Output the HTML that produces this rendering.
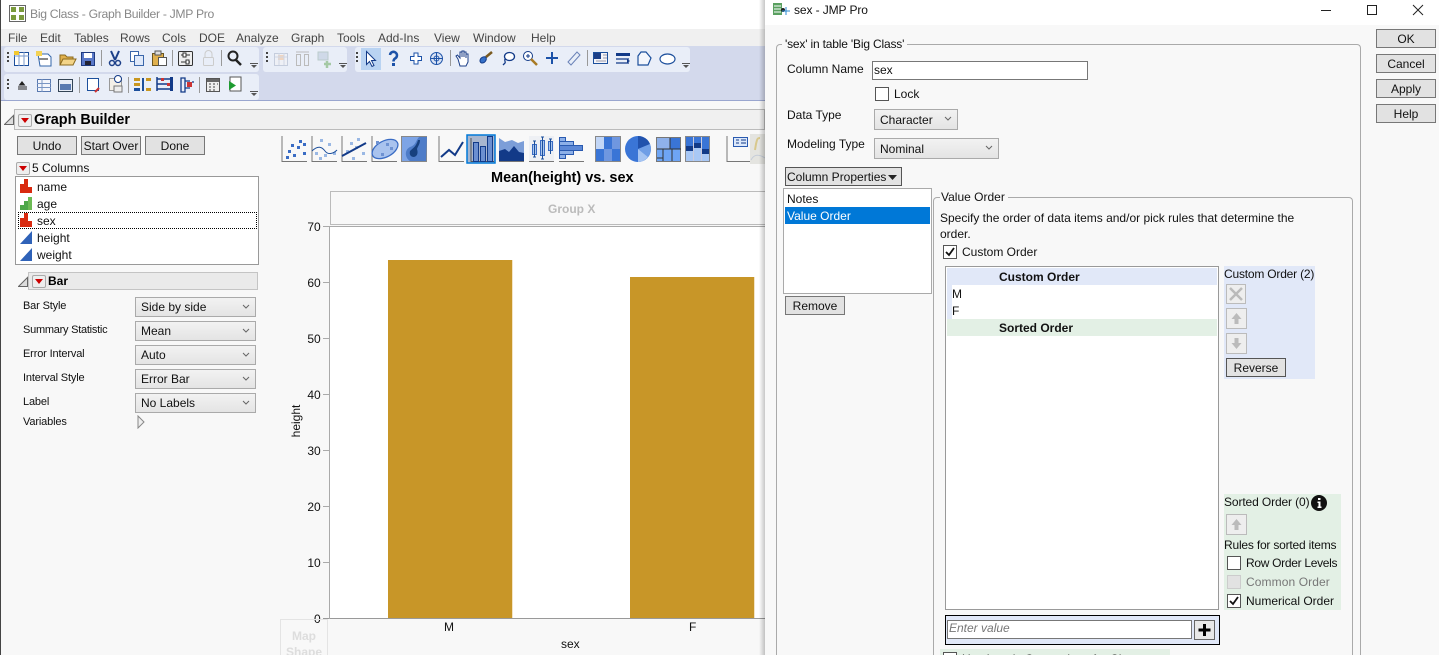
<!DOCTYPE html>
<html><head><meta charset="utf-8"><style>
html,body{margin:0;padding:0;background:#f8f8f8;overflow:hidden}
#r{position:relative;width:1439px;height:655px;overflow:hidden;background:#f8f8f8;font:12px/14px "Liberation Sans",sans-serif;color:#111}
#r div,#r svg{position:absolute}
.t{white-space:nowrap}
.b{background:#e2e2e2;border:1px solid #777;box-sizing:border-box;text-align:center;white-space:nowrap}
.s{background:linear-gradient(#f2f2f2,#e4e4e4);border:1px solid #aaa;box-sizing:border-box;padding-left:5px;white-space:nowrap;line-height:19px}
.s svg{right:5px;top:6px}
.c{background:#fff;border:1px solid #555;box-sizing:border-box;width:14px;height:14px}
.tb{background:#e9eef8;border-radius:3px}
.m{color:#444;top:31px}
.rd{width:12px;height:11px;background:#eee;border:1px solid #aaa;border-radius:2px}
.rd:after{content:"";position:absolute;left:2px;top:3px;border:4px solid transparent;border-top:5px solid #c00;border-bottom:0}
.ib{background:#eee;border:1px solid #bbb;box-sizing:border-box}
.gr{border:1px solid #aaa;border-bottom:none;border-radius:4px 4px 0 0;box-sizing:border-box}
.tk{background:#aaa;height:1px;width:6px;left:323px}
.yl{left:307px;width:14px;text-align:center}
.lb{left:23px;font-size:11px;letter-spacing:-.15px}
</style></head><body><div id="r">

<!-- main window -->
<div style="left:0;top:0;width:765px;height:29px;background:#fff"></div>
<svg style="left:9px;top:5px" width="17" height="17" viewBox="0 0 17 17"><rect x=".5" y=".5" width="16" height="16" fill="#fff" stroke="#666"/><rect x="2" y="2" width="5" height="5" fill="#7a9a3c"/><rect x="10" y="2" width="5" height="5" fill="#7a9a3c"/><rect x="2" y="10" width="5" height="5" fill="#7a9a3c"/><rect x="10" y="10" width="5" height="5" fill="#7a9a3c"/></svg>
<div class="t" style="left:30px;top:7px;color:#888;font-size:12.2px;letter-spacing:-.31px">Big Class - Graph Builder - JMP Pro</div>
<div style="left:0;top:29px;width:765px;height:17px;background:#f0f0f0"></div>
<div class="t m" style="left:8px">File</div><div class="t m" style="left:40px">Edit</div><div class="t m" style="left:74px">Tables</div><div class="t m" style="left:120px">Rows</div><div class="t m" style="left:162px">Cols</div><div class="t m" style="left:199px">DOE</div><div class="t m" style="left:236px">Analyze</div><div class="t m" style="left:291px">Graph</div><div class="t m" style="left:337px">Tools</div><div class="t m" style="left:378px">Add-Ins</div><div class="t m" style="left:434px">View</div><div class="t m" style="left:473px">Window</div><div class="t m" style="left:531px">Help</div>
<div style="left:0;top:46px;width:765px;height:54px;background:#d3d9ec;border-bottom:1px solid #9aa6cf"></div>
<div class="tb" style="left:4px;top:47px;width:255px;height:25px"></div>
<div class="tb" style="left:263px;top:47px;width:84px;height:25px"></div>
<div class="tb" style="left:355px;top:47px;width:335px;height:25px"></div>
<div class="tb" style="left:4px;top:74px;width:255px;height:26px"></div>
<div style="left:361px;top:48px;width:20px;height:22px;background:#b9d3f2"></div>

<svg style="left:0;top:46px" width="765" height="54" viewBox="0 0 765 54" fill="none" stroke-width="1">
<!-- grips -->
<g fill="#444" stroke="none"><rect x="7" y="6" width="2" height="2"/><rect x="7" y="10" width="2" height="2"/><rect x="7" y="14" width="2" height="2"/><rect x="266" y="6" width="2" height="2"/><rect x="266" y="10" width="2" height="2"/><rect x="266" y="14" width="2" height="2"/><rect x="356" y="6" width="2" height="2"/><rect x="356" y="10" width="2" height="2"/><rect x="356" y="14" width="2" height="2"/><rect x="7" y="33" width="2" height="2"/><rect x="7" y="37" width="2" height="2"/><rect x="7" y="41" width="2" height="2"/></g>
<!-- overflow -->
<g fill="#555" stroke="none"><path d="M250 17h8v1h-8zM251 19h6l-3 3zM339 17h8v1h-8zM340 19h6l-3 3zM682 17h8v1h-8zM683 19h6l-3 3zM250 45h8v1h-8zM251 47h6l-3 3z"/></g>
<!-- separators -->
<g stroke="#999"><path d="M101.500 4v16M172.500 4v16M221.500 4v16M450.500 4v16M587.500 4v16M79.500 31v16M128.500 31v16M199.500 31v16"/></g>
<!-- row 1 -->
<rect x="14.500" y="6.500" width="14" height="13" fill="#fff" stroke="#1c4f9c"/><path d="M14 10h15M19 6v14M24 6v14" stroke="#7a9acb"/><rect x="14" y="5" width="5" height="4" fill="#f3c82f"/>
<path d="M38 8h10l3 3v9H40z" fill="#fff" stroke="#36a"/><rect x="36" y="5" width="6" height="5" fill="#f3d255"/><rect x="39" y="12" width="9" height="2" fill="#888"/>
<path d="M60 19V9h5l2 2h6v8z" fill="#e0b04d" stroke="#8a6a20"/><path d="M60 19l3-6h13l-3 6z" fill="#f3d488" stroke="#8a6a20"/>
<rect x="81.500" y="6.500" width="13" height="13" fill="#5a78c8" stroke="#1f3a80"/><rect x="84" y="7" width="8" height="5" fill="#fff"/><rect x="85" y="15" width="6" height="4" fill="#223"/>
<path d="M111 5l4 9M119 5l-4 9" stroke="#1c3f88" stroke-width="2"/><circle cx="112" cy="17" r="2.500" stroke="#1c3f88" stroke-width="1.500"/><circle cx="118" cy="17" r="2.500" stroke="#1c3f88" stroke-width="1.500"/>
<rect x="130.500" y="5.500" width="8" height="10" fill="#fff" stroke="#3a66aa"/><rect x="134.500" y="9.500" width="9" height="10" fill="#dfe9fa" stroke="#3a66aa"/>
<rect x="152.500" y="7.500" width="11" height="12" fill="#e0b04d" stroke="#6a5520"/><rect x="155" y="5" width="6" height="4" fill="#ddd" stroke="#555"/><rect x="158.500" y="11.500" width="8" height="8" fill="#fff" stroke="#555"/>
<rect x="178.500" y="5.500" width="14" height="14" rx="1" fill="#eee" stroke="#333"/><path d="M181 9h9M181 16h9" stroke="#333"/><rect x="183" y="7" width="3" height="4" fill="#fff" stroke="#333"/><rect x="186" y="14" width="3" height="4" fill="#fff" stroke="#333"/>
<rect x="203.500" y="11.500" width="10" height="8" rx="1" stroke="#ccc"/><path d="M205 11V8a3.500 3.500 0 0 1 7 0v3" stroke="#ccc"/>
<circle cx="233" cy="10" r="4.500" stroke="#222" stroke-width="2"/><path d="M236 14l5 5" stroke="#222" stroke-width="2.500"/>
<!-- disabled -->
<rect x="274.500" y="7.500" width="13" height="12" fill="#eef0f6" stroke="#c5cddd"/><rect x="278" y="9" width="6" height="5" fill="#f0d5c0"/><path d="M275 11h12M279 7v12M284 7v12" stroke="#d0d6e4"/>
<rect x="296.500" y="8.500" width="4" height="11" stroke="#bbb"/><rect x="304.500" y="8.500" width="4" height="11" stroke="#bbb"/><path d="M296 6h13" stroke="#bbb"/>
<rect x="318" y="6" width="10" height="8" fill="#cfd9e8" stroke="#bcc"/><path d="M327 15v7M324 18h7" stroke="#a5c9a5" stroke-width="2.500"/>
<!-- arrow -->
<path d="M366.500 5.500v13l3-3 2.500 5 2-1-2.500-5h4z" fill="#fff" stroke="#123a88"/>
<path d="M390 9a3.500 3.500 0 1 1 5 3.500c-1 .7-1.500 1.500-1.500 3" stroke="#1c52a8" stroke-width="2.500"/><rect x="392" y="17" width="3" height="3" fill="#1c52a8"/>
<path d="M412.500 6.500h4v3.500h3.500v4h-3.500v3.500h-4V14H409v-4h3.500z" transform="translate(1.500 .5)" fill="#fff" stroke="#1c52a8"/>
<circle cx="436.500" cy="12.500" r="6" fill="#d8e2f4" stroke="#1c52a8"/><circle cx="436.500" cy="12.500" r="2.500" stroke="#1c52a8"/><path d="M436.500 7v11M431 12.500h11" stroke="#1c52a8"/>
<path d="M458 13l-2-3 1.500-1 2.500 3V6h2v5V5h2v6V6h2v6V8h2v8l-2 4h-6z" fill="#fff" stroke="#1c3f88"/>
<path d="M480 15c0-3 3-5 6-4 1 3-1 6-4 6-1 0-2-1-2-2z" fill="#3570c8" stroke="#123a88"/><path d="M486 11l6-5" stroke="#7a5a20" stroke-width="2.500"/>
<ellipse cx="509.500" cy="10.500" rx="5" ry="4" fill="#fff" stroke="#123a88" stroke-width="1.300"/><path d="M505 13c-1 2 1 3 0 4l-2 2" stroke="#123a88" stroke-width="1.300"/>
<circle cx="528" cy="10" r="4.500" fill="#fff" stroke="#123a88"/><path d="M526 10h4M528 8v4" stroke="#123a88"/><path d="M531 13l6 6" stroke="#a87a25" stroke-width="2.500"/>
<path d="M552 6v12M546 12h12" stroke="#1c52a8" stroke-width="2"/>
<path d="M568 16l9-10 3 3-9 10z" fill="#e8eef8" stroke="#6a82b8"/>
<rect x="593.500" y="6.500" width="14" height="11" fill="#f4f4f8" stroke="#1c4f9c"/><rect x="594" y="7" width="7" height="6" fill="#1c3f88"/><path d="M603 9h4M603 12h4M596 15h10" stroke="#99a"/>
<rect x="616" y="7" width="14" height="3" fill="#123a88"/><path d="M616 13h13M616 17h13" stroke="#123a88" stroke-width="1.300"/><path d="M630 15l-3-2v4z" fill="#123a88"/>
<path d="M638 19V10l3-4h5l5 6-3 7z" fill="#f4f6fc" stroke="#1c4f9c" stroke-width="1.200"/>
<ellipse cx="667.500" cy="13" rx="7.500" ry="5" fill="#fff" stroke="#1c4f9c" stroke-width="1.200"/>
<!-- row 2 -->
<path d="M22 35l-3.500 4.500h7z" fill="#222"/><path d="M18 41h9M18 43h9" stroke="#222"/>
<rect x="37.500" y="33.500" width="13" height="12" stroke="#5a7ab0" fill="#f4f6fc"/><path d="M42 33v13M37 37.500h14M37 41.500h14" stroke="#7a96c4"/>
<rect x="58.500" y="33.500" width="14" height="12" fill="#e8edf6" stroke="#345"/><rect x="60" y="38" width="11" height="6" fill="#5a7ab0"/>
<rect x="87.500" y="32.500" width="11" height="12" fill="#fff" stroke="#1c4f9c"/><path d="M95 46l4-4" stroke="#c33" stroke-width="2"/>
<rect x="109.500" y="32.500" width="12" height="12" fill="#f4f0e8" stroke="#999"/><circle cx="118" cy="33" r="3.500" fill="#fff" stroke="#123a88"/><rect x="114" y="40" width="8" height="6" fill="#eee" stroke="#777"/>
<rect x="134" y="32" width="6" height="3" fill="#c8961f"/><rect x="134" y="37" width="6" height="3" fill="#c8961f"/><rect x="134" y="42" width="6" height="3" fill="#1c4f9c"/><path d="M143 32v13" stroke="#1c4f9c" stroke-width="2"/><rect x="146" y="32" width="5" height="3" fill="#c8961f"/><rect x="146" y="42" width="5" height="3" fill="#c8961f"/>
<path d="M157 33h13M157 38h13M157 43h13M157 31v14" stroke="#123a88" stroke-width="1.500"/><rect x="161" y="32" width="3" height="3" fill="#c33"/><rect x="167" y="37" width="3" height="3" fill="#c33"/><rect x="170" y="31" width="3" height="14" fill="#123a88"/>
<path d="M181 32h4v14h-4zM185 35h5M185 42h5M190 38h2M192 36h2" stroke="#123a88" stroke-width="1.300"/><rect x="187" y="36" width="5" height="5" fill="#c33"/>
<rect x="206.500" y="32.500" width="13" height="13" fill="#eee" stroke="#555"/><rect x="207" y="33" width="12" height="3" fill="#666"/><path d="M209 38h2M213 38h2M217 38h1M209 41h2M213 41h2M209 44h2M213 44h2" stroke="#444"/>
<rect x="230" y="31" width="11" height="14" fill="#fff" stroke="#555"/><path d="M229 35v9l7-4.500z" fill="#1e9c30"/>
</svg>

<!-- Graph builder -->
<svg style="left:4px;top:113px" width="11" height="12"><path d="M.5 11.500h9v-9z" fill="#ddd" stroke="#666"/></svg>
<div style="left:14px;top:109px;width:751px;height:21px;background:#f0f0f0;border:1px solid #bbb;box-sizing:border-box"></div>
<div class="rd" style="left:18px;top:114px"></div>
<div class="t" style="left:34px;top:113px;font-size:14.4px;font-weight:bold;color:#000">Graph Builder</div>
<div class="b" style="left:17px;top:136px;width:60px;height:19px;line-height:18px">Undo</div>
<div class="b" style="left:81px;top:136px;width:60px;height:19px;line-height:18px">Start Over</div>
<div class="b" style="left:145px;top:136px;width:60px;height:19px;line-height:18px">Done</div>
<div class="rd" style="left:16px;top:162px"></div>
<div class="t" style="left:32px;top:161px">5 Columns</div>
<div style="left:15px;top:176px;width:244px;height:89px;background:#fff;border:1px solid #999;box-sizing:border-box"></div>
<div style="left:18px;top:212px;width:239px;height:17px;border:1px dotted #000;box-sizing:border-box"></div>
<svg style="left:20px;top:179px" width="14" height="85"><g fill="#d92a10"><path d="M0 5h4v9H0zM4 0h4v14H4zM8 8h4v6H8z"/><path d="M0 39h4v9H0zM4 34h4v14H4zM8 42h4v6H8z"/></g><g fill="#4ea84a"><path d="M0 26h4v5H0zM4 22h4v9H4z"/><path d="M8 18h4v13H8z" fill="#6dbb55"/></g><g fill="#2f62b8"><path d="M0 65L12 52v13zM0 82L12 69v13z"/></g></svg>
<div class="t" style="left:37px;top:180px">name</div><div class="t" style="left:37px;top:197px">age</div><div class="t" style="left:37px;top:214px">sex</div><div class="t" style="left:37px;top:231px">height</div><div class="t" style="left:37px;top:248px">weight</div>

<svg style="left:18px;top:275px" width="11" height="12"><path d="M.5 11.500h9v-9z" fill="#ddd" stroke="#666"/></svg>
<div style="left:28px;top:272px;width:230px;height:18px;background:#eaeaea;border:1px solid #c4c4c4;box-sizing:border-box"></div>
<div class="rd" style="left:32px;top:275px"></div>
<div class="t" style="left:48px;top:274px;font-weight:bold;color:#000">Bar</div>
<div class="t lb" style="top:299px">Bar Style</div>
<div class="t lb" style="top:323px;letter-spacing:-.25px">Summary Statistic</div>
<div class="t lb" style="top:347px">Error Interval</div>
<div class="t lb" style="top:371px">Interval Style</div>
<div class="t lb" style="top:395px">Label</div>
<div class="t lb" style="top:415px">Variables</div>
<div class="s" style="left:135px;top:297px;width:121px;height:20px">Side by side<svg width="8" height="5"><path d="M1 1l3 3 3-3" fill="none" stroke="#666"/></svg></div>
<div class="s" style="left:135px;top:321px;width:121px;height:20px">Mean<svg width="8" height="5"><path d="M1 1l3 3 3-3" fill="none" stroke="#666"/></svg></div>
<div class="s" style="left:135px;top:345px;width:121px;height:20px">Auto<svg width="8" height="5"><path d="M1 1l3 3 3-3" fill="none" stroke="#666"/></svg></div>
<div class="s" style="left:135px;top:369px;width:121px;height:20px">Error Bar<svg width="8" height="5"><path d="M1 1l3 3 3-3" fill="none" stroke="#666"/></svg></div>
<div class="s" style="left:135px;top:393px;width:121px;height:20px">No Labels<svg width="8" height="5"><path d="M1 1l3 3 3-3" fill="none" stroke="#666"/></svg></div>
<svg style="left:137px;top:415px" width="9" height="14"><path d="M1 1l6 6-6 6z" fill="#eee" stroke="#888"/></svg>

<!-- graph type icons -->
<svg style="left:270px;top:130px" width="495" height="36" viewBox="270 130 495 36" fill="none">
<g stroke="#777"><path d="M282 162V136M282 161.500h25M312 162V136M312 161.500h25M342 162V136M342 161.500h25M372 162V136M372 161.500h25M439 162V136M439 161.500h25M499 161.500h25M529 161.500h25M559 161.500h25M727 162V136M727 161.500h25"/></g>
<g fill="#3a6cc4"><rect x="291" y="144" width="3" height="3"/><rect x="299" y="140" width="3" height="3"/><rect x="288" y="150" width="3" height="3"/><rect x="297" y="146" width="3" height="3"/><rect x="303" y="143" width="3" height="3"/><rect x="293" y="154" width="3" height="3"/><rect x="303" y="152" width="3" height="3"/><rect x="286" y="156" width="3" height="3"/></g>
<g fill="#9ab8e4"><rect x="320" y="139" width="3" height="3"/><rect x="328" y="143" width="3" height="3"/><rect x="315" y="152" width="3" height="3"/><rect x="324" y="154" width="3" height="3"/><rect x="333" y="152" width="3" height="3"/><rect x="319" y="157" width="3" height="3"/></g>
<path d="M312 151c6-6 10-4 13 0s8 3 12-1" stroke="#1c4f9c"/>
<g fill="#9ab8e4"><rect x="350" y="142" width="3" height="3"/><rect x="357" y="138" width="3" height="3"/><rect x="346" y="150" width="3" height="3"/><rect x="355" y="146" width="3" height="3"/><rect x="352" y="157" width="3" height="3"/><rect x="362" y="152" width="3" height="3"/></g>
<path d="M342 156l24-13" stroke="#123a88" stroke-width="2"/>
<ellipse cx="385" cy="149" rx="14" ry="8" transform="rotate(-28 385 149)" fill="#a9c3ee" stroke="#3a6cc4" stroke-width="1.300"/>
<g fill="#6e92d2"><rect x="376" y="141" width="3" height="3"/><rect x="386" y="143" width="3" height="3"/><rect x="381" y="153" width="3" height="3"/><rect x="390" y="147" width="3" height="3"/></g>
<rect x="401.500" y="136.500" width="25" height="25" fill="#7da4e6" stroke="#888"/><path d="M427 137h-8c-4 5-3 8-9 10-6 3-5 11 0 14h16z" fill="#4e7cc8"/><path d="M418 140c-2 7-5 8-8 11-1 4 1 6 4 6 4-1 4-5 3-8 1-3 3-5 3-9z" fill="#17407e"/>
<path d="M441 157l8-7 6 5 8-13" stroke="#123a88" stroke-width="2"/>
<rect x="467" y="135" width="28" height="28" fill="#a8b6cf" stroke="#0078d7" stroke-width="1.500"/>
<path d="M471 138v24M471 161.500h23" stroke="#555"/><g fill="#6b8fd0" stroke="#123a88"><rect x="473.500" y="142.500" width="5" height="19"/><rect x="480.500" y="146.500" width="5" height="15"/><rect x="487.500" y="136.500" width="5" height="25"/></g>
<path d="M499 161v-23l6 4 7-2 6 3 6-2v20z" fill="#7c9ed8"/><path d="M499 161v-10l6-2 4 3 5-6 5 6 5 1v8z" fill="#123a88"/>
<rect x="529" y="136" width="25" height="25" fill="#eef0f4"/><g fill="#a9c5ee" stroke="#3a6cc4"><rect x="532.500" y="144.500" width="4" height="10"/><rect x="540.500" y="140.500" width="4" height="15"/><rect x="548.500" y="141.500" width="4" height="9"/></g><path d="M534.500 141v16M542.500 137v22M550.500 139v15M533 141h3M541 137h3M549 139h3M541 159h3M533 157h3" stroke="#1c4f9c"/>
<g fill="#8db0e8" stroke="#2a5ab0"><rect x="559.500" y="137.500" width="6" height="4"/><rect x="559.500" y="141.500" width="14" height="4"/><rect x="559.500" y="145.500" width="23" height="5" fill="#5c88d6"/><rect x="559.500" y="150.500" width="14" height="4"/><rect x="559.500" y="154.500" width="6" height="4"/></g>
<rect x="595.500" y="136.500" width="25" height="25" fill="#8fb1ea" stroke="#888"/><g fill="#3a75d6"><rect x="596" y="149" width="8" height="12"/><rect x="604" y="137" width="8" height="12"/><rect x="612" y="149" width="8" height="12"/></g><g fill="#c2d6f6"><rect x="596" y="137" width="8" height="12"/><rect x="604" y="149" width="8" height="12" fill="#6f97e0"/><rect x="612" y="137" width="8" height="12" fill="#6f97e0"/></g>
<circle cx="638" cy="149" r="13" fill="#3a75d6"/><path d="M638 149V136a13 13 0 0 1 12 8z" fill="#2152ad"/><path d="M638 149l12-5a13 13 0 0 1-2 13z" fill="#6f9ee6"/><path d="M638 149l10 8a13 13 0 0 1-10 5z" fill="#a5c4f2"/>
<rect x="656.500" y="137.500" width="24" height="24" fill="#6ea5f5" stroke="#777"/><rect x="657" y="138" width="13" height="11" fill="#8fb1ea"/><rect x="670" y="138" width="10" height="11" fill="#3a75d6"/><path d="M657 149h24M670 138v11M663 149v12M672 149v12M657 158h6" stroke="#333"/>
<rect x="685.500" y="136.500" width="24" height="25" fill="#a9c8f5" stroke="#888"/><rect x="686" y="137" width="7" height="9" fill="#3a75d6"/><rect x="686" y="146" width="7" height="5" fill="#123a88"/><rect x="694" y="137" width="7" height="6" fill="#3a75d6"/><rect x="694" y="143" width="7" height="5" fill="#123a88"/><rect x="702" y="137" width="7" height="12" fill="#3a75d6"/><rect x="702" y="149" width="7" height="5" fill="#123a88"/><path d="M693.500 137v24M701.500 137v24" stroke="#ccd"/>
<rect x="733.500" y="137.500" width="14" height="9" fill="#dce8fa" stroke="#2a5ab0"/><path d="M736 140h3M736 143h3M741 140h5M741 143h5" stroke="#123a88"/>
<rect x="750" y="134" width="15" height="30" fill="#e4e4e0"/><path d="M760 138c-3 0-3 2-4 6l-1 6" stroke="#d8c88c" stroke-width="2"/><path d="M751 160c3-6 8-6 14-2" stroke="#c5ccd8"/>
</svg>

<!-- chart -->
<div class="t" style="left:491px;top:169px;font-size:14.5px;line-height:18px;font-weight:bold;color:#000">Mean(height) vs. sex</div>
<div style="left:330px;top:191px;width:440px;height:34px;background:#f8f8f8;border:1px solid #bbb;box-sizing:border-box"></div>
<div class="t" style="left:548px;top:202px;font-weight:bold;color:#bbb">Group X</div>
<div style="left:330px;top:227px;width:435px;height:391px;background:#fff"></div>
<div style="left:323px;top:226px;width:442px;height:1px;background:#aaa"></div>
<div style="left:323px;top:618px;width:442px;height:1px;background:#999"></div>
<div style="left:329px;top:226px;width:1px;height:393px;background:#aaa"></div>
<div style="left:388px;top:260px;width:124px;height:358px;background:#c89628"></div>
<div style="left:512px;top:260px;width:1px;height:358px;background:#f4e4c4"></div>
<div style="left:630px;top:277px;width:124px;height:341px;background:#c89628"></div>
<div style="left:754px;top:277px;width:1px;height:341px;background:#f4e4c4"></div>
<div class="tk" style="top:282px"></div><div class="tk" style="top:338px"></div><div class="tk" style="top:394px"></div><div class="tk" style="top:450px"></div><div class="tk" style="top:506px"></div><div class="tk" style="top:562px"></div>
<div class="t yl" style="top:220px">70</div><div class="t yl" style="top:276px">60</div><div class="t yl" style="top:332px">50</div><div class="t yl" style="top:388px">40</div><div class="t yl" style="top:444px">30</div><div class="t yl" style="top:500px">20</div><div class="t yl" style="top:556px">10</div><div class="t" style="left:314px;top:612px">0</div>
<div style="left:280px;top:619px;width:48px;height:36px;border:1px solid #e4e4e4;border-bottom:none;box-sizing:border-box;overflow:hidden;text-align:center;font-weight:bold;color:#ddd;line-height:16px;padding-top:8px">Map<br>Shape</div>
<div class="t" style="left:444px;top:620px">M</div><div class="t" style="left:689px;top:620px">F</div><div class="t" style="left:561px;top:637px">sex</div>
<div class="t" style="left:279px;top:414px;width:34px;text-align:center;transform:rotate(-90deg)">height</div>
<div style="left:0;top:0;width:1px;height:655px;background:#444"></div>

<!-- shadow -->
<div style="left:759px;top:0;width:6px;height:655px;background:linear-gradient(to right,rgba(0,0,0,0),rgba(0,0,0,.22))"></div>

<!-- dialog -->
<div style="left:765px;top:0;width:674px;height:655px;background:#f8f8f8"></div>
<div style="left:765px;top:0;width:674px;height:25px;background:#fff"></div>
<svg style="left:773px;top:1px" width="17" height="16"><rect x="0" y="2" width="9" height="12" fill="#5aa060"/><path d="M1 5h7M1 8h7M1 11h7" stroke="#fff"/><circle cx="10" cy="9" r="2" fill="#222"/><path d="M13 6v8M9 10h8" stroke="#2a8ad0"/></svg>
<div class="t" style="left:794px;top:3px;letter-spacing:-.1px">sex - JMP Pro</div>
<svg style="left:1320px;top:2px" width="110" height="16" fill="none" stroke="#222"><path d="M1 8.500h10"/><rect x="47.500" y="3.500" width="9" height="9"/><path d="M93 3l10 10M103 3l-10 10"/></svg>
<div class="b" style="left:1376px;top:29px;width:60px;height:19px;line-height:18px">OK</div>
<div class="b" style="left:1376px;top:54px;width:60px;height:19px;line-height:18px">Cancel</div>
<div class="b" style="left:1376px;top:79px;width:60px;height:19px;line-height:18px">Apply</div>
<div class="b" style="left:1376px;top:104px;width:60px;height:19px;line-height:18px">Help</div>

<div class="gr" style="left:776px;top:44px;width:585px;height:611px"></div>
<div class="t" style="left:782px;top:37px;background:#f8f8f8;padding:0 3px;letter-spacing:-.18px">'sex' in table 'Big Class'</div>
<div class="t" style="left:787px;top:62px">Column Name</div>
<div style="left:872px;top:61px;width:216px;height:19px;background:#fff;border:1px solid #777;box-sizing:border-box;padding-left:1px;line-height:17px">sex</div>
<div class="c" style="left:875px;top:87px"></div><div class="t" style="left:894px;top:87px">Lock</div>
<div class="t" style="left:787px;top:108px">Data Type</div>
<div class="s" style="left:874px;top:109px;width:84px;height:21px;line-height:20px">Character<svg width="8" height="5"><path d="M1 1l3 3 3-3" fill="none" stroke="#666"/></svg></div>
<div class="t" style="left:787px;top:137px">Modeling Type</div>
<div class="s" style="left:874px;top:138px;width:125px;height:21px;line-height:20px">Nominal<svg width="8" height="5"><path d="M1 1l3 3 3-3" fill="none" stroke="#666"/></svg></div>
<div style="left:785px;top:167px;width:117px;height:19px;background:#e2e2e2;border:1px solid #555;box-sizing:border-box;padding-left:1px;line-height:18px;white-space:nowrap">Column Properties<svg style="right:4px;top:7px" width="9" height="5"><path d="M0 0h9L4.500 5z" fill="#222"/></svg></div>
<div style="left:783px;top:188px;width:149px;height:106px;background:#fff;border:1px solid #aaa;box-sizing:border-box"></div>
<div style="left:785px;top:207px;width:145px;height:17px;background:#0078d7"></div>
<div class="t" style="left:787px;top:192px">Notes</div><div class="t" style="left:787px;top:209px;color:#fff">Value Order</div>
<div class="b" style="left:785px;top:296px;width:60px;height:19px;line-height:18px">Remove</div>

<div class="gr" style="left:933px;top:197px;width:420px;height:458px"></div>
<div class="t" style="left:940px;top:190px;background:#f8f8f8;padding:0 3px 0 1px">Value Order</div>
<div class="t" style="left:940px;top:211px">Specify the order of data items and/or pick rules that determine the</div>
<div class="t" style="left:940px;top:227px">order.</div>
<div class="c" style="left:943px;top:245px"></div>
<svg style="left:945px;top:247px" width="11" height="10"><path d="M1 5l3 3 5-7" fill="none" stroke="#111" stroke-width="1.800"/></svg>
<div class="t" style="left:962px;top:245px">Custom Order</div>

<div style="left:945px;top:266px;width:274px;height:344px;background:#fff;border:1px solid #999;box-sizing:border-box"></div>
<div style="left:947px;top:268px;width:270px;height:17px;background:#e1e8f8"></div>
<div style="left:947px;top:285px;width:5px;height:34px;background:#e1e8f8"></div>
<div style="left:947px;top:319px;width:270px;height:17px;background:#e3f0e5"></div>
<div class="t" style="left:999px;top:270px;font-weight:bold">Custom Order</div>
<div class="t" style="left:952px;top:287px">M</div><div class="t" style="left:952px;top:304px">F</div>
<div class="t" style="left:999px;top:321px;font-weight:bold">Sorted Order</div>

<div style="left:1224px;top:266px;width:91px;height:113px;background:#e1e8f8"></div>
<div class="t" style="left:1224px;top:267px;letter-spacing:-.2px">Custom Order (2)</div>
<div class="ib" style="left:1226px;top:284px;width:20px;height:20px"></div>
<svg style="left:1226px;top:284px" width="20" height="20"><path d="M4 4l12 12M16 4L4 16" stroke="#bbb" stroke-width="2.500"/></svg>
<div class="ib" style="left:1226px;top:308px;width:21px;height:21px"></div>
<svg style="left:1226px;top:308px" width="21" height="21"><path d="M10.500 5l5 6h-3v5h-4v-5h-3z" fill="#bbb"/></svg>
<div class="ib" style="left:1226px;top:333px;width:21px;height:21px"></div>
<svg style="left:1226px;top:333px" width="21" height="21"><path d="M10.500 16l5-6h-3V5h-4v5h-3z" fill="#bbb"/></svg>
<div class="b" style="left:1226px;top:358px;width:60px;height:19px;line-height:18px;border-color:#555">Reverse</div>

<div style="left:1224px;top:494px;width:117px;height:116px;background:#e3f0e5"></div>
<div class="t" style="left:1224px;top:495px;letter-spacing:-.12px">Sorted Order (0)</div>
<svg style="left:1311px;top:495px" width="16" height="16"><circle cx="8" cy="8" r="8" fill="#111"/><path d="M7 3h2.500v2H7zM6.500 6.500h3v5h1V13h-4v-1.500h1V8h-1z" fill="#fff"/></svg>
<div class="ib" style="left:1226px;top:514px;width:21px;height:21px"></div>
<svg style="left:1226px;top:514px" width="21" height="21"><path d="M10.500 5l5 6h-3v5h-4v-5h-3z" fill="#bbb"/></svg>
<div class="t" style="left:1224px;top:538px;letter-spacing:-.2px">Rules for sorted items</div>
<div class="c" style="left:1227px;top:556px"></div><div class="t" style="left:1246px;top:556px;letter-spacing:-.3px">Row Order Levels</div>
<div class="c" style="left:1227px;top:575px;background:#e2e2e2;border-color:#ccc"></div><div class="t" style="left:1246px;top:575px;color:#777;letter-spacing:.1px">Common Order</div>
<div class="c" style="left:1227px;top:594px"></div>
<svg style="left:1229px;top:596px" width="11" height="10"><path d="M1 5l3 3 5-7" fill="none" stroke="#111" stroke-width="1.800"/></svg>
<div class="t" style="left:1246px;top:594px">Numerical Order</div>

<div style="left:945px;top:615px;width:275px;height:30px;background:#e1e8f8;border:1px solid #000;box-sizing:border-box"></div>
<div style="left:947px;top:620px;width:245px;height:19px;background:#fff;border:1px solid #777;box-sizing:border-box;padding-left:1px;line-height:15px;font-style:italic;color:#777">Enter value</div>
<div class="ib" style="left:1194px;top:620px;width:21px;height:20px;border-color:#666;background:#e8e8e8"></div>
<svg style="left:1194px;top:620px" width="21" height="20"><path d="M10.500 4v12M4.500 10h12" stroke="#000" stroke-width="3"/></svg>
<div style="left:940px;top:649px;width:230px;height:6px;background:#e3f0e5"></div>
<div style="left:943px;top:652px;width:14px;height:3px;background:#fff;border:1px solid #555;border-bottom:none;box-sizing:border-box"></div>
<div class="t" style="left:962px;top:652px;height:3px;overflow:hidden">Use Levels Comparison for Charts</div>

</div></body></html>
